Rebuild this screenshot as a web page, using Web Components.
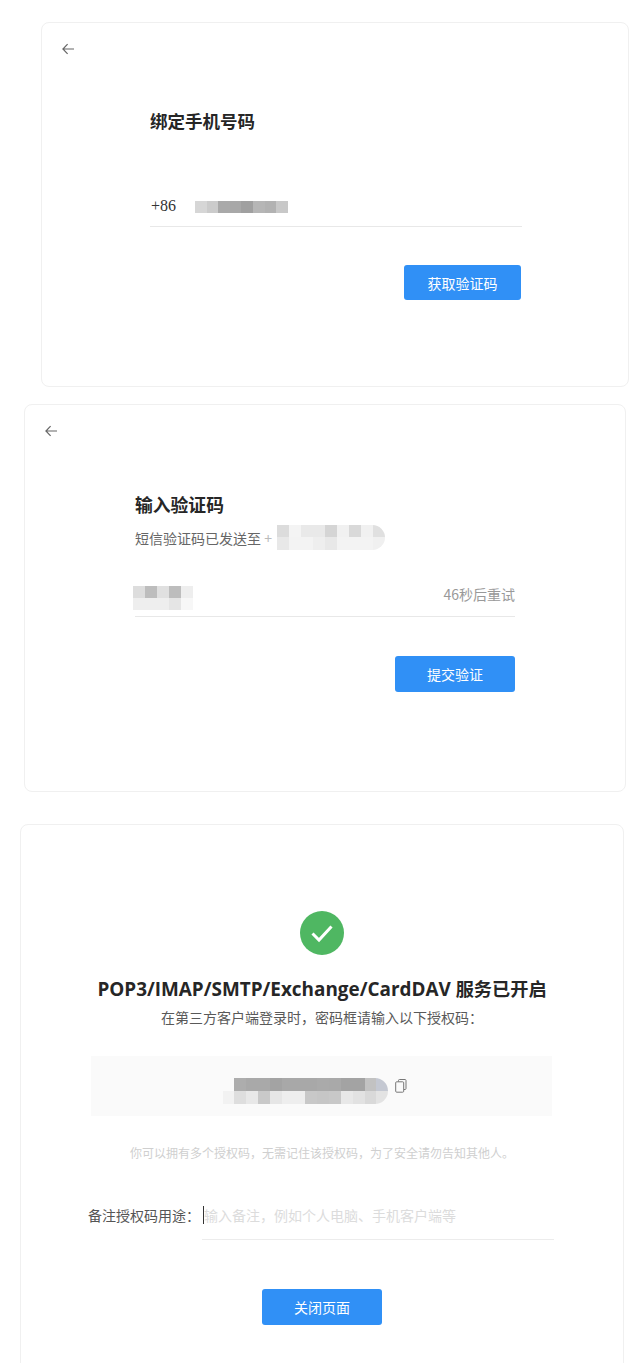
<!DOCTYPE html>
<html lang="zh">
<head>
<meta charset="utf-8">
<title>授权码</title>
<style>
  html, body { margin: 0; background: #fff; }
  body {
    height: 1363px;
    overflow: hidden;
    font-family: "Noto Sans CJK SC", "Liberation Sans", sans-serif;
    color: #333;
  }
  main { display: flex; flex-direction: column; }
</style>
</head>
<body>
<main>
  <auth-card style="--left:41px;--top:22px;--w:588px;--h:365px">
    <back-arrow></back-arrow>
    <auth-step style="--left:108px;--w:372px;--title-size:17.5px;--title-top:52px;--field-top:53px;--button-top:38px;--button-w:117px;--button-h:35px;--button-right:1px">
      <span slot="title">绑定手机号码</span>
      <span slot="field" style="display:flex;align-items:center"><span style="font:16px 'Liberation Serif',serif;color:#333;margin:-2px 19px 0 1px">+86</span><pixel-block cell="11.6" rows="12" colors="#d6d6d6 #cbcbcb #a9a9a9 #a8a8a8 #a0a0a0 #b6b6b6 #b2b2b2 #c8c8c8"></pixel-block></span>
      <span slot="button">获取验证码</span>
    </auth-step>
  </auth-card>

  <auth-card style="--left:24px;--top:17px;--w:602px;--h:388px">
    <back-arrow></back-arrow>
    <auth-step style="--left:110px;--w:380px;--title-size:17.8px;--title-top:53px;--field-top:27px;--button-top:39px;--button-w:120px;--button-h:36px">
      <span slot="title">输入验证码</span>
      <span slot="sub">短信验证码已发送至&nbsp;<span style="color:#bbb;margin-right:5px">+</span><pixel-block round cell="12" rows="12 13" colors="#dcdcdc #f4f4f4 #e9e9e9 #e9e9e9 #d5d5d5 #f1f1f1 #d9d9d9 #f1f1f1 #e0e0e0|#e8e8e8 #f3f3f3 #f3f3f3 #eeeeee #e8e8e8 #f3f3f3 #f3f3f3 #f3f3f3 #f0f0f0"></pixel-block></span>
      <span slot="field" style="margin-left:-2px"><pixel-block cell="12" rows="12 12" colors="#dddddd #bdbdbd #e0e0e0 #bdbdbd #eeeeee|#eeeeee #eeeeee #eeeeee #e5e5e5 #f7f7f7"></pixel-block></span>
      <span slot="extra">46秒后重试</span>
      <span slot="button">提交验证</span>
    </auth-step>
  </auth-card>

  <auth-card style="--left:20px;--top:32px;--w:604px;--h:560px">
    <result-panel>
      <span slot="title"><span style="font-family:'Open Sans',sans-serif;font-size:18.9px">POP3/IMAP/SMTP/Exchange/CardDAV </span>服务已开启</span>
      <span slot="sub">在第三方客户端登录时，密码框请输入以下授权码：</span>
      <pixel-block slot="code" round cell="11.85" rows="13 13" colors="transparent #adadad #a9a9a9 #a9a9a9 #a3a3a3 #a8a8a8 #a8a8a8 #a8a8a8 #aaaaaa #a9a9a9 #a3a3a3 #a3a3a3 #c2c2c2 #c4c8d2|#f2f2f2 #dedede #e8e8e8 #c9c9c9 #e6e6e6 #eeeeee #eeeeee #c8c8c8 #c6c6c6 #c8c8c8 #e8e8e8 #e2e2e2 #d9d9d9 #e3e3e3"></pixel-block>
      <span slot="hint">你可以拥有多个授权码，无需记住该授权码，为了安全请勿告知其他人。</span>
      <span slot="label">备注授权码用途：</span>
      <span slot="placeholder">输入备注，例如个人电脑、手机客户端等</span>
      <span slot="button">关闭页面</span>
    </result-panel>
  </auth-card>
</main>

<template id="auth-card-tpl">
  <style>
    :host {
      display: block;
      box-sizing: border-box;
      margin: var(--top) 0 0 var(--left);
      width: var(--w);
      height: var(--h);
      flex: none;
      border: 1px solid #f0f0f0;
      border-radius: 8px;
      background: #fff;
    }
  </style>
  <slot></slot>
</template>

<template id="back-arrow-tpl">
  <style>
    :host { display: block; width: 14px; height: 14px; margin: 19px 0 0 19px; }
    svg { display: block; }
  </style>
  <svg width="14" height="14" viewBox="0 0 14 14" fill="none" stroke="#666" stroke-width="1.2">
    <path d="M13 7H2M6.6 2.2 1.9 7l4.7 4.8"/>
  </svg>
</template>

<template id="blue-button-tpl">
  <style>
    :host {
      display: flex;
      align-items: center;
      justify-content: center;
      box-sizing: border-box;
      width: var(--button-w, 120px);
      height: var(--button-h, 36px);
      border-radius: 3px;
      background: #3090f6;
      color: #fff;
      font-size: 14px;
    }
  </style>
  <slot></slot>
</template>

<template id="auth-step-tpl">
  <style>
    :host {
      display: block;
      width: var(--w);
      margin-left: var(--left);
    }
    .title { margin-top: var(--title-top); font-size: var(--title-size); line-height: 26px; font-weight: 700; color: #262626; }
    ::slotted([slot=sub]) {
      display: flex;
      align-items: center;
      margin-top: 8px;
      height: 25px;
      font-size: 14px;
      color: #666;
    }
    .field {
      box-sizing: border-box;
      height: 40px;
      margin-top: var(--field-top);
      display: flex;
      align-items: center;
      justify-content: space-between;
      border-bottom: 1px solid #e8e8e8;
    }
    .extra { font-size: 14px; color: #999; margin-bottom: 6px; }
    blue-button { margin: var(--button-top) var(--button-right, 0) 0 auto; }
  </style>
  <div class="title"><slot name="title"></slot></div>
  <slot name="sub"></slot>
  <div class="field"><slot name="field"></slot><span class="extra"><slot name="extra"></slot></span></div>
  <blue-button><slot name="button"></slot></blue-button>
</template>

<template id="result-panel-tpl">
  <style>
    :host { display: flex; flex-direction: column; align-items: center; width: 602px; }
    .mark { display: block; margin-top: 86px; }
    .title { margin-top: 19px; height: 28px; font-size: 18.2px; line-height: 28px; font-weight: 700; color: #262626; white-space: nowrap; }
    .sub { margin-top: 5px; font-size: 14px; line-height: 20px; color: #595959; }
    .box {
      display: flex;
      align-items: center;
      gap: 7px;
      box-sizing: border-box;
      width: 461px;
      height: 60px;
      margin: 29px 2px 0 0;
      padding-left: 132px;
      background: #fafafa;
    }
    .box svg { margin-top: -1px; }
    ::slotted([slot=code]) { margin-top: 10px; }
    .hint { margin-top: 27px; font-size: 12px; line-height: 20px; color: #cfcfcf; }
    .row { display: flex; align-items: flex-start; margin: 40px 2px 0 0; width: 466px; font-size: 14px; }
    .label { line-height: 24px; color: #555; margin-right: 2px; white-space: nowrap; }
    .input {
      flex: 1;
      display: flex;
      align-items: center;
      height: 37px;
      box-sizing: border-box;
      padding: 0 0 13px 1px;
      border-bottom: 1px solid #ececec;
      color: #dcdcdc;
      line-height: 24px;
      white-space: nowrap;
    }
    .caret { width: 1px; height: 18px; background: #333; flex: none; }
    blue-button { margin-top: 49px; }
  </style>
  <svg class="mark" width="44" height="44" viewBox="0 0 44 44">
    <circle cx="22" cy="22" r="22" fill="#4fb762"/>
    <path d="M12.5 22.5 19 29 31.5 15.5" fill="none" stroke="#fff" stroke-width="3"/>
  </svg>
  <div class="title"><slot name="title"></slot></div>
  <div class="sub"><slot name="sub"></slot></div>
  <div class="box">
    <slot name="code"></slot>
    <svg width="12" height="14" viewBox="0 0 12 14" fill="none" stroke="#777" stroke-width="1">
      <path d="M3.5 2.5V1.4c0-.5.4-.9.9-.9h5.7c.5 0 .9.4.9.9v8.2c0 .5-.4.9-.9.9H9"/>
      <rect x=".7" y="2.8" width="8" height="10.4" rx="1"/>
    </svg>
  </div>
  <div class="hint"><slot name="hint"></slot></div>
  <div class="row">
    <span class="label"><slot name="label"></slot></span>
    <div class="input"><i class="caret"></i><slot name="placeholder"></slot></div>
  </div>
  <blue-button><slot name="button"></slot></blue-button>
</template>

<script>
  function tplClass(id) {
    return class extends HTMLElement {
      constructor() {
        super();
        const shadow = this.attachShadow({mode: 'open'});
        shadow.appendChild(document.getElementById(id).content.cloneNode(true));
      }
    };
  }

  // mosaic over hidden numbers: colors="a b c|d e f", rows="12 13"
  class PixelBlock extends HTMLElement {
    constructor() {
      super();
      this.attachShadow({mode: 'open'});
    }

    connectedCallback() {
      const cell = this.getAttribute('cell') || 12;
      const rows = this.getAttribute('rows').split(' ');
      const lines = this.getAttribute('colors').split('|').map(l => l.split(' '));
      const round = this.hasAttribute('round');
      let cells = '';
      lines.forEach(line => {
        line.forEach(c => { cells += `<i style="background:${c}"></i>`; });
      });
      this.shadowRoot.innerHTML = `
        <style>
          :host { display: inline-block; vertical-align: middle; flex: none; }
          .grid {
            display: grid;
            grid-template-columns: repeat(${lines[0].length}, ${cell}px);
            grid-template-rows: ${rows.map(r => r + 'px').join(' ')};
            border-radius: ${round ? '0 13px 13px 0' : '0'};
            overflow: hidden;
            filter: blur(.4px);
          }
        </style>
        <div class="grid">${cells}</div>`;
    }
  }

  customElements.define('auth-card', tplClass('auth-card-tpl'));
  customElements.define('back-arrow', tplClass('back-arrow-tpl'));
  customElements.define('blue-button', tplClass('blue-button-tpl'));
  customElements.define('auth-step', tplClass('auth-step-tpl'));
  customElements.define('result-panel', tplClass('result-panel-tpl'));
  customElements.define('pixel-block', PixelBlock);
</script>
</body>
</html>
